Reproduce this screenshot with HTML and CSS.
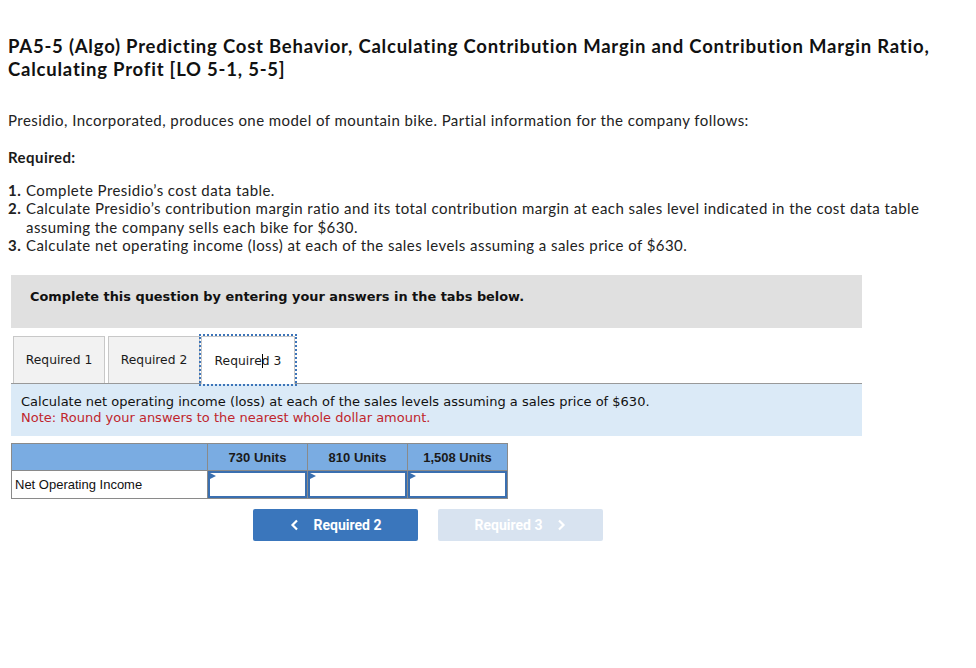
FILE: index.html
```html
<!DOCTYPE html>
<html>
<head>
<meta charset="utf-8">
<link rel="stylesheet" href="styles.css">
</head>
<body>
<div class="page">
  <h1 class="title">PA5-5 (Algo) Predicting Cost Behavior, Calculating Contribution Margin and Contribution Margin Ratio, Calculating Profit [LO 5-1, 5-5]</h1>
  <p class="intro">Presidio, Incorporated, produces one model of mountain bike. Partial information for the company follows:</p>
  <p class="req-label">Required:</p>
  <ol class="req-list">
    <li><span class="num">1.</span><span>Complete Presidio’s cost data table.</span></li>
    <li><span class="num">2.</span><span>Calculate Presidio’s contribution margin ratio and its total contribution margin at each sales level indicated in the cost data table assuming the company sells each bike for $630.</span></li>
    <li><span class="num">3.</span><span>Calculate net operating income (loss) at each of the sales levels assuming a sales price of $630.</span></li>
  </ol>

  <div class="panel">
    <div class="banner">Complete this question by entering your answers in the tabs below.</div>
    <div class="tabs">
      <div class="tab">Required 1</div>
      <div class="tab">Required 2</div>
      <div class="tab active"><span>Requir</span><span class="caret">e</span><span>d 3</span></div>
    </div>
    <div class="instructions">
      <div>Calculate net operating income (loss) at each of the sales levels assuming a sales price of $630.</div>
      <div class="note">Note: Round your answers to the nearest whole dollar amount.</div>
    </div>
    <table class="grid">
      <tr class="head">
        <th class="label-col"></th>
        <th>730 Units</th>
        <th>810 Units</th>
        <th>1,508 Units</th>
      </tr>
      <tr>
        <td class="label-col">Net Operating Income</td>
        <td class="input"><div class="field"></div></td>
        <td class="input"><div class="field"></div></td>
        <td class="input"><div class="field"></div></td>
      </tr>
    </table>
    <div class="nav">
      <div class="btn prev"><svg width="10" height="12" viewBox="0 0 10 12"><path d="M7 1.5 L2.5 6 L7 10.5" fill="none" stroke="#fff" stroke-width="2.2"/></svg><span>Required 2</span></div>
      <div class="btn next"><span>Required 3</span><svg width="10" height="12" viewBox="0 0 10 12"><path d="M3 1.5 L7.5 6 L3 10.5" fill="none" stroke="#fff" stroke-width="2.2"/></svg></div>
    </div>
  </div>
</div>
</body>
</html>
```

FILE: styles.css
```css
* { box-sizing: border-box; }
body {
  margin: 0;
  background: #fff;
  color: #1a1a1a;
  font-family: "Lato", "Noto Sans", sans-serif;
}
.page {
  padding: 35px 8px 0 8px;
}
.title {
  margin: 0;
  font-size: 18.5px;
  line-height: 23px;
  font-weight: 700;
  color: #111;
  width: 950px;
  letter-spacing: 0.78px;
}
.intro {
  margin: 29px 0 0 0;
  font-size: 15px;
  line-height: 20px;
  color: #222;
  letter-spacing: 0.44px;
}
.req-label {
  margin: 17px 0 0 0;
  font-size: 15px;
  font-weight: 700;
  line-height: 20px;
  letter-spacing: 0.44px;
}
.req-list {
  list-style: none;
  margin: 14px 0 0 0;
  padding: 0;
  font-size: 15px;
  line-height: 18.3px;
  color: #222;
  width: 920px;
  letter-spacing: 0.44px;
}
.req-list li {
  display: flex;
}
.req-list .num {
  font-weight: 700;
  width: 18px;
  flex: none;
}
.panel {
  padding: 0 0 0 3px;
}
.banner {
  margin-top: 21px;
  width: 851px;
  height: 53px;
  background: #e0e0e0;
  display: flex;
  align-items: center;
  padding-left: 19px;
  padding-bottom: 10px;
  font-family: "DejaVu Sans", Verdana, sans-serif;
  font-weight: 700;
  font-size: 12.9px;
  color: #111;
}
.tabs {
  margin-top: 8px;
  width: 851px;
  display: flex;
  align-items: flex-end;
  gap: 3px;
  padding-left: 2px;
  border-bottom: 1px solid #999;
}
.tab {
  width: 92px;
  height: 47px;
  background: #f2f2f2;
  border: 1px solid #c8c8c8;
  border-bottom: none;
  display: flex;
  align-items: center;
  justify-content: center;
  font-family: "DejaVu Sans", Verdana, sans-serif;
  font-size: 12.3px;
  color: #1a1a1a;
}
.tab.active {
  background: #fff;
  width: 94px;
  margin-left: -2px;
  outline: 2px dotted #3c74b8;
  outline-offset: 0px;
  height: 48px;
  margin-bottom: -1px;
}
.caret {
  border-right: 1px solid #000;
  margin-right: -1px;
}
.instructions {
  width: 851px;
  height: 52px;
  background: #dbeaf7;
  padding: 10px 0 0 10px;
  font-family: "DejaVu Sans", Verdana, sans-serif;
  font-size: 13px;
  line-height: 16px;
  color: #111;
}
.note {
  color: #c0262d;
}
.grid {
  margin-top: 7px;
  border-collapse: collapse;
  font-family: "Liberation Sans", Arial, sans-serif;
  font-size: 13px;
}
.grid th, .grid td {
  border: 1px solid #8a8a8a;
  padding: 0;
}
.grid .head th {
  background: #7aace2;
  height: 27px;
  width: 100px;
  font-weight: 700;
  color: #1a1a1a;
  text-align: center;
}
.grid .head th.label-col {
  width: 196px;
}
.grid td {
  height: 28px;
}
.grid td.label-col {
  padding-left: 3px;
  color: #111;
}
.field {
  height: 27px;
  border: 2px solid #3a6fb0;
  background: #fff;
  position: relative;
}
.field::before {
  content: "";
  position: absolute;
  left: 0;
  top: 0;
  border-left: 6px solid #3a6fb0;
  border-top: 3.5px solid transparent;
  border-bottom: 3.5px solid transparent;
}
.nav {
  display: flex;
  gap: 20px;
  margin-top: 10px;
  padding-left: 242px;
}
.btn {
  width: 165px;
  height: 32px;
  border-radius: 2px;
  display: flex;
  align-items: center;
  justify-content: center;
  gap: 14px;
  font-family: "Roboto", sans-serif;
  font-weight: 700;
  font-size: 14px;
  color: #fff;
}
.btn.prev {
  background: #3a76bc;
}
.btn.next {
  background: #d8e3f0;
}
```
